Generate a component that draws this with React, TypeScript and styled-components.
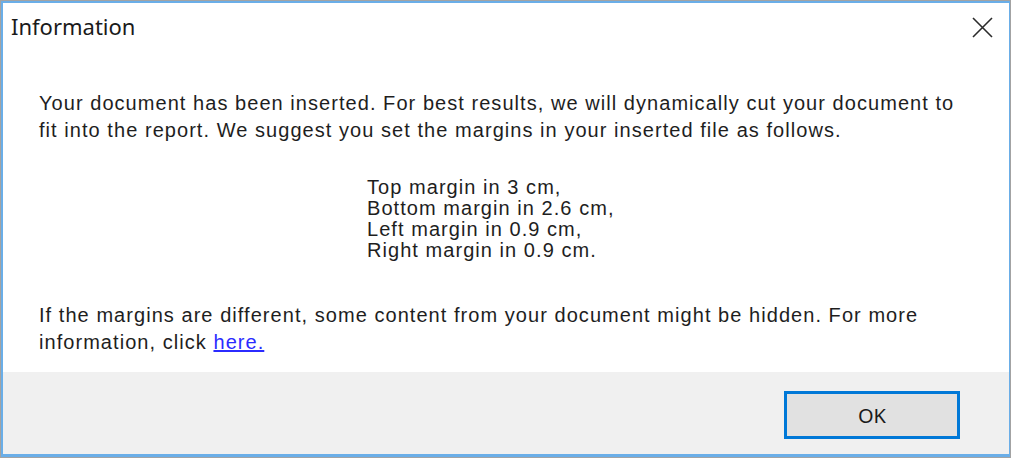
import * as React from 'react';
import styled, { createGlobalStyle } from 'styled-components';

const GlobalStyle = createGlobalStyle`
	html, body {
		margin: 0;
		padding: 0;
		background: #ffffff;
	}
	body {
		font-family: "Liberation Sans", Arial, sans-serif;
	}
`;

const Frame = styled.div`
	box-sizing: border-box;
	width: 1011px;
	height: 458px;
	border: 1px solid #a3a3a3;
	background: #ffffff;
`;

const Window = styled.div`
	box-sizing: border-box;
	display: flex;
	flex-direction: column;
	height: 100%;
	border: 2px solid #6aaee8;
	border-right-width: 1px;
	border-bottom-width: 3px;
	background: #ffffff;
`;

const TitleBar = styled.div`
	display: flex;
	align-items: flex-start;
	justify-content: space-between;
	height: 50px;
	flex-shrink: 0;
`;

const Title = styled.div`
	font-family: "Noto Sans", "Open Sans", sans-serif;
	font-size: 22px;
	line-height: 30px;
	color: #1a1a1a;
	padding: 8px 0 0 8px;
`;

const CloseButton = styled.button`
	display: flex;
	align-items: center;
	justify-content: center;
	width: 22px;
	height: 22px;
	margin: 13px 16px 0 0;
	padding: 0;
	border: none;
	background: transparent;
	cursor: pointer;
`;

const Content = styled.div`
	flex: 1;
	padding: 37px 36px 0 36px;
	font-size: 20px;
	letter-spacing: 1.05px;
	color: #1e1e1e;
`;

const Paragraph = styled.p<{ $gapBelow?: number }>`
	margin: 0 0 ${(p) => p.$gapBelow ?? 0}px 0;
	line-height: 27px;
	white-space: nowrap;
`;

const MarginList = styled.div`
	margin: 0 0 41px 328px;
	line-height: 21px;
	white-space: nowrap;
`;

const Link = styled.a`
	color: #2b2bff;
	text-decoration: underline;
`;

const Footer = styled.div`
	display: flex;
	justify-content: flex-end;
	align-items: flex-start;
	height: 82px;
	flex-shrink: 0;
	padding: 19px 49px 0 0;
	box-sizing: border-box;
	background: #f0f0f0;
`;

const Button = styled.button`
	box-sizing: border-box;
	width: 176px;
	height: 48px;
	border: 3px solid #0078d7;
	background: #e1e1e1;
	font-family: "Noto Sans", "Open Sans", sans-serif;
	font-size: 20px;
	color: #1a1a1a;
	cursor: pointer;
`;

const margins = [
	'Top margin in 3 cm,',
	'Bottom margin in 2.6 cm,',
	'Left margin in 0.9 cm,',
	'Right margin in 0.9 cm.',
];

export default function App() {
	return (
		<>
			<GlobalStyle />
			<Frame>
				<Window>
					<TitleBar>
						<Title>Information</Title>
						<CloseButton aria-label="Close">
							<svg width="21" height="21" viewBox="0 0 21 21">
								<path d="M1 1 L20 20 M20 1 L1 20" stroke="#2b2b2b" strokeWidth="1.6" fill="none" />
							</svg>
						</CloseButton>
					</TitleBar>
					<Content>
						<Paragraph $gapBelow={33}>
							Your document has been inserted. For best results, we will dynamically cut your document to
							<br />
							fit into the report. We suggest you set the margins in your inserted file as follows.
						</Paragraph>
						<MarginList>
							{margins.map((m) => (
								<div key={m}>{m}</div>
							))}
						</MarginList>
						<Paragraph>
							If the margins are different, some content from your document might be hidden. For more
							<br />
							information, click <Link href="#">here.</Link>
						</Paragraph>
					</Content>
					<Footer>
						<Button>OK</Button>
					</Footer>
				</Window>
			</Frame>
		</>
	);
}
